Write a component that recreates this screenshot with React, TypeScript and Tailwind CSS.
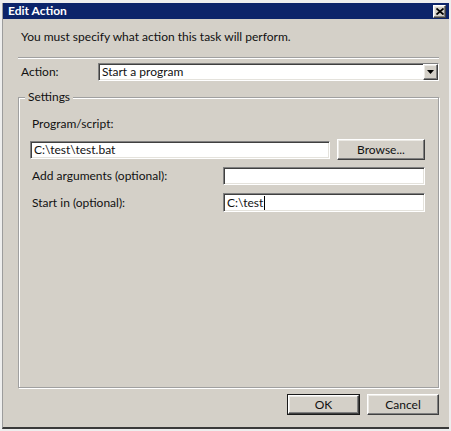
import React from "react";

const sunken =
  "border-t border-l border-t-[#808080] border-l-[#808080] border-b border-r border-b-white border-r-white shadow-[inset_1px_1px_0_#404040,inset_-1px_-1px_0_#e4e2dc]";
const raised =
  "bg-[#d4d0c8] border-t border-l border-t-white border-l-white border-b border-r border-b-[#404040] border-r-[#404040] shadow-[inset_-1px_-1px_0_#808080,inset_1px_1px_0_#eceae5]";

function TextBox({ value, caret, className }: { value: string; caret?: boolean; className: string }) {
  return (
    <div className={`bg-white ${sunken} flex items-center pl-[3px] text-[12px] leading-[14px] ${className}`}>
      <span>{value}</span>
      {caret && <span className="w-px h-[14px] bg-black ml-[1px]" />}
    </div>
  );
}

export default function App() {
  return (
    <div className="w-[451px] h-[431px] bg-[#eeeeee] pt-[3px] pl-[2px] font-['Lato',sans-serif] text-[#111111]">
      <div className="w-[447px] h-[426px] bg-[#d4d0c8] border-l border-l-[#9c9c9c] border-b-[2px] border-b-[#3a3a3a] flex flex-col">
        {/* Title bar */}
        <div className="h-[16px] bg-[#0c246a] flex items-center justify-between pl-[5px] pr-[3px]">
          <span className="text-white font-bold text-[12px] leading-[16px]">Edit Action</span>
          <div className={`w-[13px] h-[13px] ${raised} flex items-center justify-center`}>
            <svg width="8" height="7" viewBox="0 0 8 7">
              <path d="M0.5 0.5 L7.5 6.5 M7.5 0.5 L0.5 6.5" stroke="#000" strokeWidth="1.8" />
            </svg>
          </div>
        </div>

        {/* Subtitle */}
        <div className="mt-[10px] ml-[18px] text-[12px] leading-[16px]">
          You must specify what action this task will perform.
        </div>

        {/* Separator */}
        <div className="mt-[12px] ml-[15px] mr-[10px] h-[2px] border-t border-t-[#a0a0a0] border-b border-b-white" />

        {/* Action row */}
        <div className="mt-[4px] ml-[15px] mr-[10px] h-[18px] flex items-center">
          <span className="ml-[3px] w-[77px] text-[12px] leading-[16px]">Action:</span>
          <div className={`flex-1 h-[18px] bg-white ${sunken} flex items-center justify-between`}>
            <span className="pl-[3px] text-[12px] leading-[14px]">Start a program</span>
            <div className={`w-[15px] h-[16px] ${raised} flex items-center justify-center`}>
              <svg width="7" height="4" viewBox="0 0 7 4">
                <path d="M0 0 H7 L3.5 4 Z" fill="#000" />
              </svg>
            </div>
          </div>
        </div>

        {/* Settings group */}
        <div className="mt-[16px] ml-[15px] mr-[10px] h-[291px] border border-[#a0a0a0] shadow-[inset_1px_1px_0_#ffffff,1px_1px_0_#ffffff] flex flex-col">
          <span className="-mt-[9px] ml-[6px] px-[3px] w-fit bg-[#d4d0c8] text-[12px] leading-[16px]">Settings</span>

          <div className="pl-[11px] flex flex-col">
            <span className="mt-[11px] ml-[2px] text-[12px] leading-[16px]">Program/script:</span>

            <div className="mt-[7px] h-[21px] flex items-center">
              <TextBox value="C:\test\test.bat" className="w-[300px] h-[18px]" />
              <div className={`ml-[7px] w-[88px] h-[21px] ${raised} flex items-center justify-center text-[12px] leading-[16px]`}>
                Browse...
              </div>
            </div>

            <div className="mt-[7px] h-[18px] flex items-center">
              <span className="ml-[2px] w-[191px] text-[12px] leading-[16px]">Add arguments (optional):</span>
              <TextBox value="" className="w-[202px] h-[18px]" />
            </div>

            <div className="mt-[8px] h-[19px] flex items-center">
              <span className="ml-[2px] w-[191px] text-[12px] leading-[16px]">Start in (optional):</span>
              <TextBox value="C:\test" caret className="w-[202px] h-[19px]" />
            </div>
          </div>
        </div>

        {/* Buttons */}
        <div className="mt-[6px] mr-[10px] flex justify-end gap-[7px]">
          <div className="w-[73px] h-[21px] border border-[#1a1a1a] flex">
            <div className={`flex-1 ${raised} flex items-center justify-center text-[12px] leading-[16px]`}>OK</div>
          </div>
          <div className={`w-[72px] h-[21px] ${raised} flex items-center justify-center text-[12px] leading-[16px]`}>
            Cancel
          </div>
        </div>
      </div>
    </div>
  );
}
